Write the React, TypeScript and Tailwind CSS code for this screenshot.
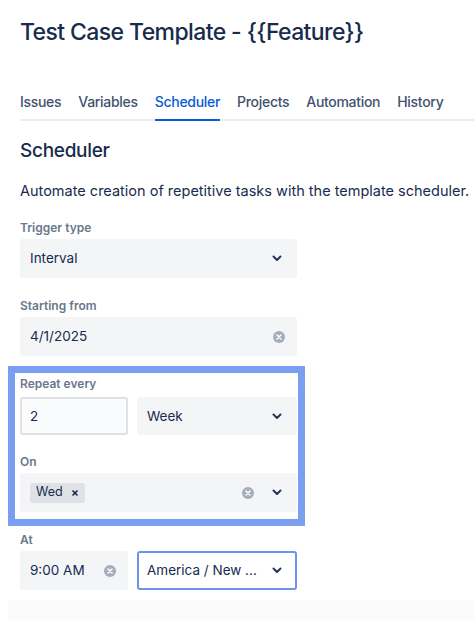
import { X } from "lucide-react";

const font = { fontFamily: "Inter, 'Noto Sans', sans-serif" };

const ClearIcon = () => (
  <svg width="12" height="12" viewBox="0 0 12 12" className="shrink-0">
    <circle cx="6" cy="6" r="6" fill="#a5adba" />
    <path d="M4 4l4 4M8 4l-4 4" stroke="#fff" strokeWidth="1.6" strokeLinecap="round" />
  </svg>
);

const Chevron = () => (
  <svg width="10" height="7" viewBox="0 0 10 7" className="shrink-0">
    <path d="M1.5 1.5L5 5l3.5-3.5" fill="none" stroke="#253858" strokeWidth="2" strokeLinecap="round" strokeLinejoin="round" />
  </svg>
);

const Label = ({ children, gap = "mb-[3px]" }: { children: React.ReactNode; gap?: string }) => (
  <div className={`text-xs font-semibold text-[#6b778c] leading-4 ${gap}`}>{children}</div>
);

const tabs = ["Issues", "Variables", "Scheduler", "Projects", "Automation", "History"];

export default function App() {
  return (
    <div className="w-[474px] h-[620px] bg-white overflow-hidden text-[#172b4d]" style={font}>
      <div className="pl-5 pt-[18px]">
        <h1 className="text-[23px] font-medium leading-7 tracking-[-0.6px]">Test Case Template - {"{{Feature}}"}</h1>

        <div className="mt-[46px] flex gap-[17px] border-b-2 border-[#ebecf0] text-sm tracking-[-0.3px] font-medium text-[#42526e]">
          {tabs.map((t) => (
            <div
              key={t}
              className={
                t === "Scheduler"
                  ? "pb-[7px] -mb-[2px] border-b-2 border-[#0c5bd6] text-[#0c5bd6]"
                  : "pb-[7px]"
              }
            >
              {t}
            </div>
          ))}
        </div>

        <h2 className="mt-[18px] text-[19px] font-medium leading-6 tracking-[-0.3px]">Scheduler</h2>
        <p className="mt-[18px] text-[14.5px] leading-5">Automate creation of repetitive tasks with the template scheduler.</p>

        <div className="mt-[19px] w-[277px] text-[13.5px]">
          <Label>Trigger type</Label>
          <div className="h-[39px] rounded-[3px] bg-[#f4f5f7] flex items-center justify-between pl-[10px] pr-[15px]">
            <span>Interval</span>
            <Chevron />
          </div>

          <div className="mt-[20px]">
            <Label>Starting from</Label>
            <div className="h-[39px] rounded-[3px] bg-[#f4f5f7] flex items-center justify-between pl-[10px] pr-3">
              <span>4/1/2025</span>
              <ClearIcon />
            </div>
          </div>
        </div>

        <div className="mt-[10px] -ml-3 w-[297px] border-[7px] border-[#7a9ff0] pl-[5px] pr-px pt-[3px] pb-[7px] text-[13.5px]">
          <Label gap="mb-[5px]">Repeat every</Label>
          <div className="flex gap-[9px]">
            <div className="w-[108px] h-[38px] rounded-[3px] border-2 border-[#dfe1e6] bg-[#fafbfc] flex items-center pl-2">
              2
            </div>
            <div className="flex-1 h-[38px] rounded-[3px] bg-[#f4f5f7] flex items-center justify-between pl-[10px] pr-[15px]">
              <span>Week</span>
              <Chevron />
            </div>
          </div>

          <div className="mt-[19px]">
            <Label>On</Label>
            <div className="h-[39px] rounded-[3px] bg-[#f4f5f7] flex items-center pl-[10px] pr-[15px]">
              <span className="flex items-center gap-[8px] bg-[#dfe1e6] rounded-[3px] h-[20px] px-[6px] text-[12.5px]">
                Wed
                <X className="w-[8px] h-[8px] text-[#172b4d]" strokeWidth={5} />
              </span>
              <span className="ml-auto flex items-center gap-[18px]">
                <ClearIcon />
                <Chevron />
              </span>
            </div>
          </div>
        </div>

        <div className="mt-[6px] w-[277px] text-[13.5px]">
          <Label>At</Label>
          <div className="flex gap-[9px]">
            <div className="w-[108px] h-[39px] rounded-[3px] bg-[#f4f5f7] flex items-center justify-between pl-[10px] pr-3">
              <span>9:00 AM</span>
              <ClearIcon />
            </div>
            <div className="flex-1 h-[39px] rounded-[3px] border-2 border-[#6f93ec] bg-white flex items-center justify-between pl-2 pr-[13px]">
              <span>America / New ...</span>
              <Chevron />
            </div>
          </div>
        </div>
      </div>
      <div className="mt-[10px] ml-2 h-[30px] bg-[#fafbfc]" />
    </div>
  );
}
